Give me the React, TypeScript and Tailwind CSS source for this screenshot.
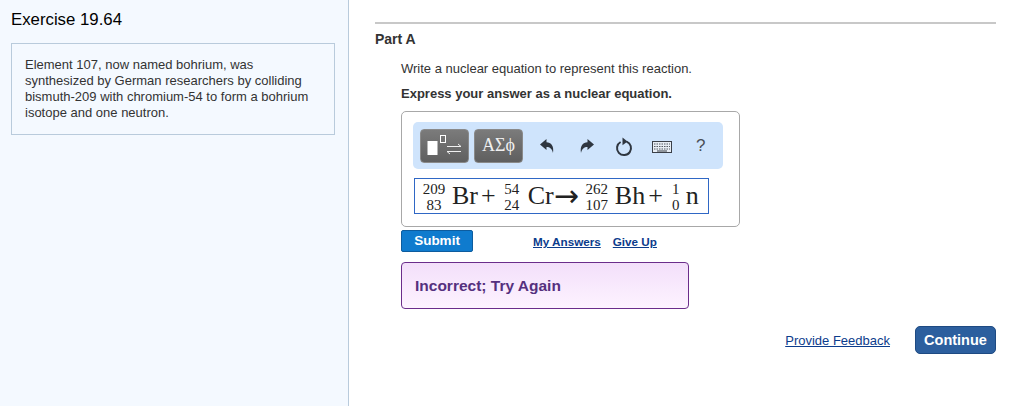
import React from "react";

function Stack({ top, bottom, className }: { top: string; bottom: string; className: string }) {
  return (
    <span className={`mt-[2px] flex flex-col items-center text-[15px] leading-[16px] ${className}`}>
      <span>{top}</span>
      <span>{bottom}</span>
    </span>
  );
}

function ToolIcon({ children, className }: { children: React.ReactNode; className: string }) {
  return <span className={`flex items-center justify-center ${className}`}>{children}</span>;
}

export default function App() {
  return (
    <div className="flex h-[406px] w-[1016px] overflow-hidden bg-white font-['Liberation_Sans',Arial,sans-serif] text-[#333]">
      <aside className="h-full w-[349px] shrink-0 border-r border-[#b9cbdc] bg-[#f4f9ff] pl-[11px] pr-[13px]">
        <h1 className="mt-[10px] text-[16.8px] leading-[20px] text-black">Exercise 19.64</h1>
        <div className="mt-[13px] h-[92px] border border-[#b9cbdc] pl-[13px] pr-2 pt-[13px] text-[13px] leading-[16px] text-[#333]">
          Element 107, now named bohrium, was
          <br />
          synthesized by German researchers by colliding
          <br />
          bismuth-209 with chromium-54 to form a bohrium
          <br />
          isotope and one neutron.
        </div>
      </aside>

      <main className="flex-1 pl-[26px] pr-5 pt-[22px]">
        <div className="h-[2px] bg-[#c8c8c8]" />
        <h2 className="mt-[7px] text-[14px] font-bold leading-[16px] text-[#333]">Part A</h2>

        <div className="ml-[26px]">
          <p className="mt-[14px] text-[13px] leading-[16px] text-[#333]">Write a nuclear equation to represent this reaction.</p>
          <p className="mt-[9px] text-[13px] font-bold leading-[16px] text-[#333]">Express your answer as a nuclear equation.</p>

          <div className="mt-[9px] h-[116px] w-[339px] rounded-[5px] border border-[#a8a8a8] bg-white pl-[11px] pt-[10px]">
            <div className="flex h-[47px] w-[310px] items-center rounded-[5px] bg-[#cfe4fc] pl-[7px]">
              <button className="flex h-[34px] w-[49px] items-center justify-center rounded-[4px] border border-[#8a8a8a] bg-gradient-to-b from-[#7b7b7b] to-[#5f5f5f]">
                <svg width="44" height="28" viewBox="0 0 44 28" fill="none">
                  <rect x="4.5" y="9" width="10" height="14" fill="#fff" />
                  <rect x="17.5" y="3.5" width="5" height="7" stroke="#fff" />
                  <path d="M24 14.5H38L35 12M38 19.5H24L27 22" stroke="#f0f0f0" strokeWidth="1" />
                </svg>
              </button>
              <button className="ml-[5px] flex h-[34px] w-[49px] items-center justify-center rounded-[4px] border border-[#8a8a8a] bg-gradient-to-b from-[#7b7b7b] to-[#5f5f5f] font-['Liberation_Serif',serif] text-[18px] text-[#f0f0f0]">
                AΣϕ
              </button>
              <ToolIcon className="ml-[14px] h-5 w-5">
                <svg width="16" height="16" viewBox="0 0 16 16">
                  <path d="M1 6.5 7.5 1V4.3C12 4.6 15.2 7.8 14 15 13 10.8 11 9 7.5 9V12Z" fill="#2f3640" />
                </svg>
              </ToolIcon>
              <ToolIcon className="ml-[20px] h-5 w-5">
                <svg width="16" height="16" viewBox="0 0 16 16">
                  <path d="M15 6.5 8.5 1V4.3C4 4.6 .8 7.8 2 15 3 10.8 5 9 8.5 9V12Z" fill="#2f3640" />
                </svg>
              </ToolIcon>
              <ToolIcon className="ml-[17px] mt-[2px] h-5 w-5">
                <svg width="18" height="20" viewBox="0 0 18 20" fill="none">
                  <path d="M11.6 4.6A7 7 0 1 1 5.6 5" stroke="#2f3640" strokeWidth="2" />
                  <path d="M7.5 0.5 12.5 4.6 7.5 8.2Z" fill="#2f3640" />
                </svg>
              </ToolIcon>
              <ToolIcon className="ml-[18px] mt-[3px] h-5 w-5">
                <svg width="20" height="12" viewBox="0 0 20 12" fill="none">
                  <rect x="0.5" y="0.5" width="19" height="11" fill="#e8eef5" stroke="#3b4048" />
                  <path d="M2 3H18M2 5.5H18M2 8H18" stroke="#555b63" strokeDasharray="1.5 1" />
                  <path d="M5 10H15" stroke="#3b4048" />
                </svg>
              </ToolIcon>
              <span className="ml-[24px] font-['Liberation_Sans',sans-serif] text-[17px] leading-none text-[#4a4f56]">?</span>
            </div>

            <div className="mt-[9px] ml-px flex h-[36px] w-[295px] items-center border border-[#2f67c5] pl-[8px] font-['Liberation_Serif',serif] text-[26px] leading-none text-[#222]">
              <Stack top="209" bottom="83" className="w-[22px]" />
              <span className="ml-[7px]">Br</span>
              <span className="ml-[3px]">+</span>
              <Stack top="54" bottom="24" className="ml-[8px] w-[16px]" />
              <span className="ml-[8px]">Cr</span>
              <span className="font-['DejaVu_Sans',sans-serif] text-[30px]">→</span>
              <Stack top="262" bottom="107" className="ml-[7px] w-[22px]" />
              <span className="ml-[7px]">Bh</span>
              <span className="ml-[3px]">+</span>
              <Stack top="1" bottom="0" className="ml-[9px] w-[8px]" />
              <span className="ml-[6px]">n</span>
            </div>
          </div>

          <div className="mt-[3px] flex h-[22px] items-center">
            <button className="flex h-[22px] w-[72px] items-center justify-center rounded-[2px] border border-[#0d5c9e] bg-[#0f7bce] pt-px text-[13.5px] font-bold text-white">
              Submit
            </button>
            <a className="ml-[60px] pt-[2px] text-[11.7px] font-bold text-[#0c3c8c] underline">My Answers</a>
            <a className="ml-3 pt-[2px] text-[11.7px] font-bold text-[#0c3c8c] underline">Give Up</a>
          </div>

          <div className="mt-[10px] flex h-[47px] w-[288px] items-center rounded-[4px] border border-[#6b2d8b] bg-gradient-to-b from-[#f3dffa] to-[#fdf3ff] pl-[13px] text-[15.5px] font-bold text-[#55307e]">
            Incorrect; Try Again
          </div>
        </div>

        <div className="mt-[17px] flex items-center justify-end">
          <a className="pt-[2px] text-[13px] text-[#0c3c8c] underline">Provide Feedback</a>
          <button className="ml-[25px] flex h-[28px] w-[81px] items-center justify-center rounded-[5px] border border-[#1e4a82] bg-[#2c5f9e] pt-px text-[14.5px] font-bold text-white">
            Continue
          </button>
        </div>
      </main>
    </div>
  );
}
